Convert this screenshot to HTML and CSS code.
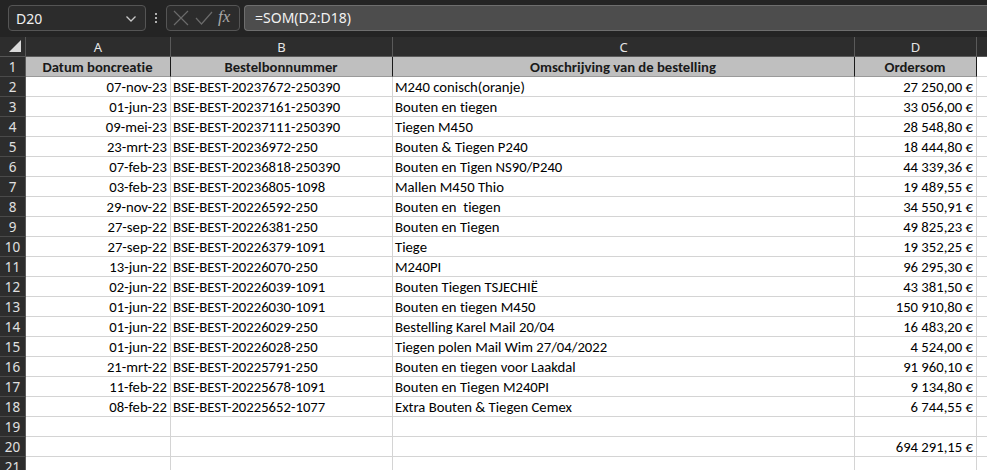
FILE: index.html
```html
<!DOCTYPE html>
<html>
<head>
<meta charset="utf-8">
<link rel="stylesheet" href="styles.css">
</head>
<body>
<div class="app">
  <div class="topbar">
    <div class="namebox">
      <span class="name">D20</span>
      <svg class="chev" width="12" height="8" viewBox="0 0 12 8"><path d="M1.5 1.5 L6 6 L10.5 1.5" fill="none" stroke="#c8c8c8" stroke-width="1.3"/></svg>
    </div>
    <div class="dots"><i></i><i></i><i></i></div>
    <div class="fxbox">
      <svg width="20" height="20" viewBox="0 0 20 20"><path d="M3 3 L17 17 M17 3 L3 17" stroke="#6b6b6b" stroke-width="1.2" fill="none"/></svg>
      <svg width="20" height="20" viewBox="0 0 20 20"><path d="M2 10 L7.5 16 L18 4" stroke="#6b6b6b" stroke-width="1.2" fill="none"/></svg>
      <span class="fx">fx</span>
    </div>
    <div class="formula">=SOM(D2:D18)</div>
  </div>
  <div class="sheet" id="sheet">
    <div class="corner"><svg width="14" height="14" viewBox="0 0 14 14"><path d="M13 1 L13 13 L1 13 Z" fill="#d9d9d9"/></svg></div>
    <div class="colh">A</div>
    <div class="colh">B</div>
    <div class="colh">C</div>
    <div class="colh">D</div>
    <div class="colh last"></div>

    <div class="rowh">1</div>
    <div class="c hd">Datum boncreatie</div>
    <div class="c hd">Bestelbonnummer</div>
    <div class="c hd">Omschrijving van de bestelling</div>
    <div class="c hd">Ordersom</div>
    <div class="c e"></div>
  </div>
</div>
<script src="script.js"></script>
</body>
</html>
```

FILE: script.js
```js
var rows = [
  ["07-nov-23","BSE-BEST-20237672-250390","M240 conisch(oranje)","27 250,00 €"],
  ["01-jun-23","BSE-BEST-20237161-250390","Bouten en tiegen","33 056,00 €"],
  ["09-mei-23","BSE-BEST-20237111-250390","Tiegen M450","28 548,80 €"],
  ["23-mrt-23","BSE-BEST-20236972-250","Bouten &amp; Tiegen P240","18 444,80 €"],
  ["07-feb-23","BSE-BEST-20236818-250390","Bouten en Tigen NS90/P240","44 339,36 €"],
  ["03-feb-23","BSE-BEST-20236805-1098","Mallen M450 Thio","19 489,55 €"],
  ["29-nov-22","BSE-BEST-20226592-250","Bouten en&nbsp; tiegen","34 550,91 €"],
  ["27-sep-22","BSE-BEST-20226381-250","Bouten en Tiegen","49 825,23 €"],
  ["27-sep-22","BSE-BEST-20226379-1091","Tiege","19 352,25 €"],
  ["13-jun-22","BSE-BEST-20226070-250","M240PI","96 295,30 €"],
  ["02-jun-22","BSE-BEST-20226039-1091","Bouten Tiegen TSJECHIË","43 381,50 €"],
  ["01-jun-22","BSE-BEST-20226030-1091","Bouten en tiegen M450","150 910,80 €"],
  ["01-jun-22","BSE-BEST-20226029-250","Bestelling Karel Mail 20/04","16 483,20 €"],
  ["01-jun-22","BSE-BEST-20226028-250","Tiegen polen Mail Wim 27/04/2022","4 524,00 €"],
  ["21-mrt-22","BSE-BEST-20225791-250","Bouten en tiegen voor Laakdal","91 960,10 €"],
  ["11-feb-22","BSE-BEST-20225678-1091","Bouten en Tiegen M240PI","9 134,80 €"],
  ["08-feb-22","BSE-BEST-20225652-1077","Extra Bouten &amp; Tiegen Cemex","6 744,55 €"],
  ["","","",""],
  ["","","","694 291,15 €"],
  ["","","",""]
];
var html = "";
rows.forEach(function (r, i) {
  html += '<div class="rowh">' + (i + 2) + '</div>' +
    '<div class="c r">' + r[0] + '</div>' +
    '<div class="c">' + r[1] + '</div>' +
    '<div class="c">' + r[2] + '</div>' +
    '<div class="c r">' + r[3] + '</div>' +
    '<div class="c e"></div>';
});
document.getElementById("sheet").insertAdjacentHTML("beforeend", html);
```

FILE: styles.css
```css
* { box-sizing: border-box; }
html, body { margin: 0; padding: 0; }
body {
  width: 987px;
  height: 470px;
  overflow: hidden;
  background: #ffffff;
  font-family: Carlito, Lato, "Liberation Sans", sans-serif;
  font-variant-ligatures: none;
  font-feature-settings: "liga" 0, "clig" 0;
}
.app { display: flex; flex-direction: column; }

.topbar {
  height: 37px;
  background: #242424;
  display: flex;
  align-items: center;
  padding: 5px 0 6px 8px;
}
.namebox {
  width: 138px;
  height: 26px;
  border: 1px solid #555555;
  border-radius: 4px;
  background: #2c2c2c;
  display: flex;
  align-items: center;
  justify-content: space-between;
  padding: 0 8px 0 7px;
  color: #f0f0f0;
  font-family: "Noto Sans", "Open Sans", sans-serif;
  font-size: 14px;
}
.chev { margin-top: 1px; }
.dots {
  width: 20px;
  display: flex;
  flex-direction: column;
  align-items: center;
  gap: 2px;
}
.dots i {
  display: block;
  width: 2px;
  height: 2px;
  background: #b0b0b0;
}
.fxbox {
  width: 74px;
  height: 26px;
  border: 1px solid #555555;
  border-radius: 4px;
  background: #2c2c2c;
  display: flex;
  align-items: center;
  padding: 0 3px 0 4px;
  gap: 3px;
}
.fx {
  font-family: "Liberation Serif", serif;
  font-style: italic;
  font-size: 17px;
  color: #a8a8a8;
  margin-left: 1px;
  margin-top: -3px;
}
.formula {
  flex: 1;
  height: 26px;
  margin-left: 4px;
  border: 1px solid #6e6e6e;
  border-right: none;
  border-radius: 4px 0 0 4px;
  background: #4d4d4d;
  color: #f2f2f2;
  font-family: "Noto Sans", "Open Sans", sans-serif;
  font-size: 14px;
  line-height: 24px;
  padding-left: 10px;
}

.sheet {
  display: grid;
  grid-template-columns: 26px 145px 222px 462px 122px 1fr;
  grid-auto-rows: 20px;
}
.corner {
  background: #2d2d2d;
  border-right: 1px solid #555;
  border-bottom: 1px solid #555;
  display: flex;
  align-items: flex-end;
  justify-content: flex-end;
  padding: 0 3px 3px 0;
}
.colh {
  background: #2d2d2d;
  color: #e6e6e6;
  border-right: 1px solid #5a5a5a;
  border-bottom: 1px solid #5a5a5a;
  font-family: "Noto Sans", "Open Sans", sans-serif;
  font-size: 13px;
  line-height: 20px;
  text-align: center;
}
.colh.last { border-right: none; }
.rowh {
  background: #2d2d2d;
  color: #e0e0e0;
  border-right: 1px solid #5a5a5a;
  border-bottom: 1px solid #4a4a4a;
  font-family: "Noto Sans", "Open Sans", sans-serif;
  font-size: 13.5px;
  line-height: 20px;
  text-align: center;
}
.c {
  border-right: 1px solid #d4d4d4;
  border-bottom: 1px solid #d4d4d4;
  color: #000;
  font-size: 14.7px;
  line-height: 21px;
  padding: 0 3px 0 2px;
  white-space: nowrap;
}
.c.r { text-align: right; }
.c.hd {
  background: #bfbfbf;
  font-weight: bold;
  text-align: center;
  border-right: 1px solid #1a1a1a;
  border-bottom: 1px solid #9a9a9a;
  color: #1a1a1a;
}
.c.e { border-right: none; }
```
